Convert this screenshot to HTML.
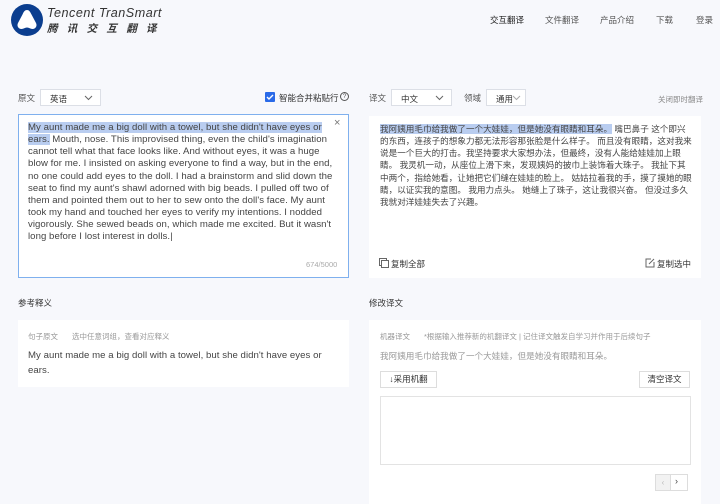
<!DOCTYPE html>
<html><head><meta charset="utf-8"><style>
*{margin:0;padding:0;box-sizing:border-box}
body{width:720px;height:504px;background:#f7f8fc;font-family:"Liberation Sans","Noto Sans CJK SC",sans-serif;position:relative;overflow:hidden;color:#333}
.a{position:absolute;white-space:nowrap}
.nav{font-size:8.5px;color:#555;top:14px}
.sel{position:absolute;height:17px;background:#fff;border:1px solid #dcdfe6;font-size:8.5px;color:#333;padding:3px 0 0 9px}
.sel svg{position:absolute;right:7px;top:5px}
.lab{font-size:8.5px;color:#555}
.en{font-size:9.6px;color:#444;line-height:12.15px;letter-spacing:0.05px}
.zh div{font-size:8.6px;line-height:12.15px;color:#444;height:12.15px}
.hl{background:#b9cdf0}
.btn{position:absolute;background:#fff;border:1px solid #ddd;font-size:8.5px;color:#333;text-align:center;line-height:15px}
</style></head><body>
<svg class="a" style="left:11px;top:4px" width="32" height="32" viewBox="0 0 32 32"><circle cx="16" cy="16" r="16" fill="#0b3e8f"/><path d="M16 6c2 0 3 1.5 4.5 4.5l4.5 8.5c1.5 3-0.5 6-3.5 6-2 0-3.5-1.5-5.5-1.5s-3.5 1.5-5.5 1.5c-3 0-5-3-3.5-6l4.5-8.5C12.8 7.5 14 6 16 6z" fill="#fff"/></svg>
<div class="a" style="left:47px;top:6px;font-size:12.6px;font-style:italic;color:#333;letter-spacing:0.5px">Tencent TranSmart</div>
<div class="a" style="left:47px;top:21px;font-size:10.5px;font-style:italic;color:#333;letter-spacing:9.3px;font-weight:bold">腾讯交互翻译</div>
<div class="a nav" style="left:490px;color:#222">交互翻译</div>
<div class="a nav" style="left:545px">文件翻译</div>
<div class="a nav" style="left:600px">产品介绍</div>
<div class="a nav" style="left:656px">下载</div>
<div class="a nav" style="left:696px">登录</div>

<div class="a lab" style="left:18px;top:92px">原文</div>
<div class="sel" style="left:40px;top:89px;width:61px">英语<svg width="9" height="6"><path d="M1 1l3.5 3.5L8 1" stroke="#666" fill="none"/></svg></div>
<div class="a" style="left:265px;top:92px;width:10px;height:10px;background:#2a6ae8;border-radius:1px"><svg width="10" height="10" style="position:absolute;left:0;top:0"><path d="M2 5l2 2 4-4" stroke="#fff" stroke-width="1.4" fill="none"/></svg></div>
<div class="a lab" style="left:279px;top:92px;color:#333">智能合并粘贴行</div>
<div class="a" style="left:340px;top:92px;width:9px;height:9px;border:1px solid #555;border-radius:50%;font-size:6.5px;text-align:center;line-height:7px;color:#555">?</div>

<div class="a" style="left:18px;top:114px;width:331px;height:164px;background:#fff;border:1px solid #7fb0ee"></div>
<div class="a" style="left:334px;top:117px;font-size:11px;color:#777">×</div>
<div class="a en" style="left:28px;top:122px"><span class="hl">My aunt made me a big doll with a towel, but she didn't have eyes or</span><br><span class="hl">ears.</span> Mouth, nose. This improvised thing, even the child's imagination<br>cannot tell what that face looks like. And without eyes, it was a huge<br>blow for me. I insisted on asking everyone to find a way, but in the end,<br>no one could add eyes to the doll. I had a brainstorm and slid down the<br>seat to find my aunt's shawl adorned with big beads. I pulled off two of<br>them and pointed them out to her to sew onto the doll's face. My aunt<br>took my hand and touched her eyes to verify my intentions. I nodded<br>vigorously. She sewed beads on, which made me excited. But it wasn't<br>long before I lost interest in dolls.|</div>
<div class="a" style="left:306px;top:260px;font-size:7.5px;color:#aaa">674/5000</div>

<div class="a lab" style="left:369px;top:92px">译文</div>
<div class="sel" style="left:391px;top:89px;width:61px">中文<svg width="9" height="6"><path d="M1 1l3.5 3.5L8 1" stroke="#666" fill="none"/></svg></div>
<div class="a lab" style="left:464px;top:92px">领域</div>
<div class="sel" style="left:486px;top:89px;width:40px">通用<svg width="9" height="6" style="right:4px"><path d="M1 1l3.5 3.5L8 1" stroke="#aaa" fill="none"/></svg></div>
<div class="a" style="left:658px;top:94px;font-size:7.5px;color:#888">关闭即时翻译</div>

<div class="a" style="left:369px;top:116px;width:332px;height:162px;background:#fff"></div>
<div class="a zh" style="left:380px;top:123px">
<div><span class="hl">我阿姨用毛巾给我做了一个大娃娃，但是她没有眼睛和耳朵。</span> 嘴巴鼻子 这个即兴</div>
<div>的东西，连孩子的想象力都无法形容那张脸是什么样子。 而且没有眼睛，这对我来</div>
<div>说是一个巨大的打击。我坚持要求大家想办法，但最终，没有人能给娃娃加上眼</div>
<div>睛。 我灵机一动，从座位上滑下来，发现姨妈的披巾上装饰着大珠子。 我扯下其</div>
<div>中两个，指给她看，让她把它们缝在娃娃的脸上。 姑姑拉着我的手，摸了摸她的眼</div>
<div>睛，以证实我的意图。 我用力点头。 她缝上了珠子，这让我很兴奋。 但没过多久</div>
<div>我就对洋娃娃失去了兴趣。</div>
</div>
<svg class="a" style="left:379px;top:258px" width="10" height="10"><rect x="0.5" y="0.5" width="7" height="7" fill="none" stroke="#666"/><rect x="2.5" y="2.5" width="7" height="7" fill="#fff" stroke="#666"/></svg>
<div class="a" style="left:391px;top:258px;font-size:8.5px;color:#333">复制全部</div>
<svg class="a" style="left:645px;top:258px" width="10" height="10"><path d="M6 1H1v8h8V4" fill="none" stroke="#666"/><path d="M4 6l5-5" stroke="#666"/></svg>
<div class="a" style="left:657px;top:258px;font-size:8.5px;color:#333">复制选中</div>

<div class="a lab" style="left:18px;top:297px;color:#333">参考释义</div>
<div class="a" style="left:18px;top:320px;width:331px;height:67px;background:#fff"></div>
<div class="a" style="left:28px;top:331px;font-size:7.5px;color:#999">句子原文</div>
<div class="a" style="left:72px;top:331px;font-size:7.5px;color:#999">选中任意词组，查看对应释义</div>
<div class="a en" style="left:28px;top:348px;line-height:15px">My aunt made me a big doll with a towel, but she didn't have eyes or<br>ears.</div>

<div class="a lab" style="left:369px;top:297px;color:#333">修改译文</div>
<div class="a" style="left:369px;top:320px;width:332px;height:184px;background:#fff"></div>
<div class="a" style="left:380px;top:331px;font-size:7.5px;color:#999">机器译文</div>
<div class="a" style="left:424px;top:331px;font-size:7.5px;color:#999">*根据输入推荐新的机翻译文 | 记住译文触发自学习并作用于后续句子</div>
<div class="a" style="left:380px;top:350px;font-size:8.6px;color:#999">我阿姨用毛巾给我做了一个大娃娃，但是她没有眼睛和耳朵。</div>
<div class="btn" style="left:380px;top:371px;width:57px;height:17px">↓采用机翻</div>
<div class="btn" style="left:639px;top:371px;width:51px;height:17px">清空译文</div>
<div class="a" style="left:380px;top:396px;width:311px;height:69px;border:1px solid #e3e3e3;background:#fff"></div>
<div class="a" style="left:655px;top:474px;width:33px;height:17px;border:1px solid #ddd;background:#fff"></div>
<div class="a" style="left:655px;top:474px;width:16px;height:17px;background:#f2f2f2;border:1px solid #ddd;font-size:8px;color:#bbb;text-align:center;line-height:15px">‹</div>
<div class="a" style="left:675px;top:476px;font-size:9px;color:#444">›</div>
</body></html>
